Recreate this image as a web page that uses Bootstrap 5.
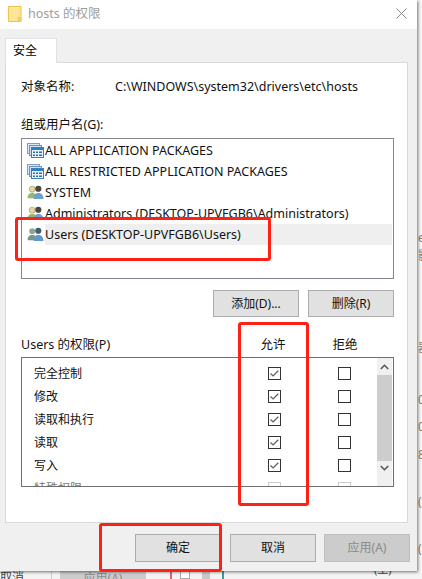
<!DOCTYPE html>
<html lang="zh-CN">
<head>
<meta charset="utf-8">
<title>hosts 的权限</title>
<link rel="stylesheet" href="https://cdn.jsdelivr.net/npm/bootstrap@5.3.0/dist/css/bootstrap.min.css">
<style>
html,body{width:422px;height:579px;overflow:hidden;background:#f7f7f7}
body{position:relative;font:12.5px/18px "Noto Sans","Noto Sans CJK SC",sans-serif;color:#111}
.stage{height:571px}
.dlg{width:417px;height:571px;background:#f0f0f0;box-shadow:1px 1px 3px rgba(0,0,0,.55);position:relative}
.ttl{height:29px;background:#fff;padding:0 0 2px 8px;color:#9d9d9d;font-size:12.5px;gap:6px}
.ttl .xbtn{margin-left:auto;margin-right:10px;display:flex}
.tabs{margin:9px 0 0 5px;border:0}
.tabs .nav-link{width:52px;height:25px;padding:2px 0 0 7px;margin-bottom:-1px;font-size:12px;line-height:20px;color:#111;background:#fff;border:1px solid #d9d9d9;border-bottom:0;border-radius:0;position:relative;z-index:1}
.pane{width:403px;height:461px;margin-left:5px;background:#fff;border:1px solid #d9d9d9;padding:15px 13px 0 15px}
.pathrow{height:18px}
.pathlbl{width:94px}
.grp{margin-top:20px;height:18px}
.lbox{height:141px;margin-top:4px;border:1px solid #828790;padding:1px 1px 0 1px;border-radius:0;background:#fff}
.lbox .list-group-item{height:21px;padding:0 0 0 4px;border:0;background:transparent;color:#111;line-height:21px;border-radius:0}
.lbox .list-group-item svg{flex:none;margin-right:1px}
.lbox .sel span{flex:1;background:#efefef}
.acts{margin-top:11px;gap:9px}
.wbtn{width:86px;height:27px;padding:0;font-size:12px;line-height:24px;color:#111;background:#e1e1e1;border:1px solid #adadad;border-radius:0}
.wbtn:disabled{background:#ccc;border-color:#bfbfbf;color:#8a8a8a;opacity:1}
.permh{margin-top:19px;height:18px}
.permh .nm{width:227px}
.permh .cola{width:50px;text-align:center}
.permh .colb{width:50px;text-align:center;margin-left:22px}
.pbox{height:130px;margin-top:3px;border:1px solid #6f6f6f;overflow:hidden;background:#fff}
.prows{flex:1;padding:4px 0 0 12px}
.prow{height:23px;line-height:23px;font-size:12px}
.prow .nm{width:234px}
.prow .form-check-input{width:13px;height:13px;margin:0;flex:none;border:1px solid #333;border-radius:0;background-color:#fff;box-shadow:none;opacity:1}
.prow .form-check-input:checked{background-color:#fff;border-color:#333;background-image:url("data:image/svg+xml,%3Csvg xmlns='http://www.w3.org/2000/svg' viewBox='0 0 11 11'%3E%3Cpath d='M1.5 5.5l2.6 2.4 5.2-5.2' fill='none' stroke='%23606060' stroke-width='1.3'/%3E%3C/svg%3E");background-size:11px 11px}
.prow .gapb{margin-left:57px}
.prow.off{color:#777}
.prow.off .form-check-input{border-color:#ccc}
.sbar{width:15px;margin-right:1px;background:#f0f0f0;flex:none}
.sbar .arr{height:17px;display:flex;align-items:center;justify-content:center}
.sbar .thumb{flex:1;background:#cdcdcd}
.foot{margin-top:11px;padding-left:135px;gap:9px}
.foot .wbtn{height:28px}
.foot .apply{margin-left:-1px}
.rmark{position:absolute;border:3px solid #ff2016;border-radius:3px;pointer-events:none;z-index:5}
.rm1{left:15px;top:217px;width:256px;height:44px}
.rm2{left:238px;top:322px;width:71px;height:184px}
.rm3{left:99px;top:523px;width:123px;height:49px}
.peekr{width:5px;overflow:hidden;color:#8f7f6c;font-size:12px;line-height:12px;padding-left:1px}
.peekr div{white-space:nowrap}
.peekr div:nth-child(1){margin-top:232px}
.peekr div:nth-child(2){margin-top:6px}
.peekr div:nth-child(3){margin-top:80px}
.peekr div:nth-child(4){margin-top:40px}
.peekr div:nth-child(5){margin-top:15px}
.peekr div:nth-child(6){margin-top:16px}
.peekr div:nth-child(7){margin-top:35px}
.peekr div:nth-child(8){margin-top:35px}
.peekb{height:8px;overflow:hidden;background:#f4f4f4;font-size:12px;line-height:18px;color:#444}
.peekb>*{flex:none;height:8px}
.pb-a{width:52px;border-right:1px solid #cfcfcf;margin-top:-2px;height:10px!important}
.pb-b{width:86px;margin-left:8px;background:#ccc;color:#8a8a8a;text-align:center;margin-top:-1px;height:9px!important}
.pb-c{width:2px;margin-left:24px;background:#d9666e}
.pb-d{width:10px;margin-left:8px;background:#fff;border:1px solid #aaa}
.pb-e{width:8px;margin-left:12px;background:#c8c8c8}
.pb-f{width:2px;margin-left:12px;background:#3f9b93}
.pb-g{margin-left:150px;font-size:11px;margin-top:-10px;height:18px!important}
</style>
</head>
<body>
<svg width="0" height="0" class="d-none">
<symbol id="ipk" viewBox="0 0 17 15">
<rect x=".5" y=".5" width="12" height="10" fill="#dbe8f4" stroke="#7f9fc0"/>
<rect x="2.5" y="2.5" width="12" height="10" fill="#cfe0f0" stroke="#6e93b8"/>
<rect x="4.500" y="4.500" width="12" height="10" fill="#eaf3fb" stroke="#3f7db5"/>
<rect x="5" y="5" width="11" height="2" fill="#2f7fc8"/>
<path d="M6 8.500h2V10H6zM9 8.500h2V10H9zM12 8.500h3V10h-3zM6 11.500h2V13H6zM9 11.500h2V13H9zM12 11.500h3V13h-3z" fill="#2a6fb0"/>
</symbol>
<symbol id="igr" viewBox="0 0 18 16">
<circle cx="5.5" cy="4.5" r="3.2" fill="#e9d3a8" stroke="#8f9a62" stroke-width=".7"/>
<path d="M.5 14c0-4 2-5.500 5-5.500s5 1.500 5 5.500z" fill="#8fbb6a"/>
<circle cx="12" cy="4" r="3.300" fill="#4d4640"/>
<path d="M7 15c0-4.500 2-6.500 5-6.500s5.500 2 5.500 6.500z" fill="#6d9fd0"/>
</symbol>
<symbol id="igs" viewBox="0 0 18 16">
<circle cx="5.500" cy="4.500" r="3.200" fill="#8fa59a"/>
<path d="M.5 14c0-4 2-5.500 5-5.500s5 1.500 5 5.500z" fill="#6f9a84"/>
<circle cx="12" cy="4" r="3.300" fill="#3f5f70"/>
<path d="M7 15c0-4.500 2-6.500 5-6.500s5.500 2 5.500 6.500z" fill="#5f97cf"/>
</symbol>
</svg>

<div class="stage d-flex">
  <div class="dlg d-flex flex-column">
    <div class="ttl d-flex align-items-center">
      <svg width="14" height="16" viewBox="0 0 14 16" class="flex-shrink-0"><path d="M.5.500h12.500v15H.5z" fill="#ffe597" stroke="#ecc34f"/><path d="M10 15.500v-4h3v4z" fill="#f6d26a" stroke="#ecc34f" stroke-width=".7"/></svg>
      <span>hosts 的权限</span>
      <span class="xbtn"><svg width="11" height="11" viewBox="0 0 11 11"><path d="M.5.500l10 10M10.500.500l-10 10" stroke="#8a8a8a" stroke-width="1" fill="none"/></svg></span>
    </div>
    <ul class="nav nav-tabs tabs"><li class="nav-item"><a class="nav-link active" href="#">安全</a></li></ul>
    <div class="pane">
      <div class="pathrow d-flex"><span class="pathlbl">对象名称:</span><span>C:\WINDOWS\system32\drivers\etc\hosts</span></div>
      <div class="grp">组或用户名(G):</div>
      <div class="list-group lbox">
        <div class="list-group-item d-flex align-items-center"><svg width="17" height="15"><use href="#ipk"/></svg><span>ALL APPLICATION PACKAGES</span></div>
        <div class="list-group-item d-flex align-items-center"><svg width="17" height="15"><use href="#ipk"/></svg><span>ALL RESTRICTED APPLICATION PACKAGES</span></div>
        <div class="list-group-item d-flex align-items-center"><svg width="17" height="15"><use href="#igr"/></svg><span>SYSTEM</span></div>
        <div class="list-group-item d-flex align-items-center"><svg width="17" height="15"><use href="#igr"/></svg><span>Administrators (DESKTOP-UPVFGB6\Administrators)</span></div>
        <div class="list-group-item sel d-flex align-items-center"><svg width="17" height="15"><use href="#igs"/></svg><span>Users (DESKTOP-UPVFGB6\Users)</span></div>
      </div>
      <div class="acts d-flex justify-content-end">
        <button type="button" class="btn wbtn">添加(D)...</button>
        <button type="button" class="btn wbtn">删除(R)</button>
      </div>
      <div class="permh d-flex"><span class="nm">Users 的权限(P)</span><span class="cola">允许</span><span class="colb">拒绝</span></div>
      <div class="pbox d-flex">
        <div class="prows">
          <div class="prow d-flex align-items-center"><span class="nm">完全控制</span><input class="form-check-input" type="checkbox" checked aria-label="允许"><input class="form-check-input gapb" type="checkbox" aria-label="拒绝"></div>
          <div class="prow d-flex align-items-center"><span class="nm">修改</span><input class="form-check-input" type="checkbox" checked aria-label="允许"><input class="form-check-input gapb" type="checkbox" aria-label="拒绝"></div>
          <div class="prow d-flex align-items-center"><span class="nm">读取和执行</span><input class="form-check-input" type="checkbox" checked aria-label="允许"><input class="form-check-input gapb" type="checkbox" aria-label="拒绝"></div>
          <div class="prow d-flex align-items-center"><span class="nm">读取</span><input class="form-check-input" type="checkbox" checked aria-label="允许"><input class="form-check-input gapb" type="checkbox" aria-label="拒绝"></div>
          <div class="prow d-flex align-items-center"><span class="nm">写入</span><input class="form-check-input" type="checkbox" checked aria-label="允许"><input class="form-check-input gapb" type="checkbox" aria-label="拒绝"></div>
          <div class="prow off d-flex align-items-center"><span class="nm">特殊权限</span><input class="form-check-input" type="checkbox" aria-label="允许"><input class="form-check-input gapb" type="checkbox" aria-label="拒绝"></div>
        </div>
        <div class="sbar d-flex flex-column">
          <div class="arr"><svg width="9" height="6" viewBox="0 0 9 6"><path d="M.8 5l3.700-3.700L8.200 5" fill="none" stroke="#555" stroke-width="1.600"/></svg></div>
          <div class="thumb"></div>
          <div class="arr mb-1 pb-1"><svg width="9" height="6" viewBox="0 0 9 6"><path d="M.8 1l3.700 3.700L8.200 1" fill="none" stroke="#555" stroke-width="1.600"/></svg></div>
          <div class="mb-1"></div>
        </div>
      </div>
    </div>
    <div class="foot d-flex">
      <button type="button" class="btn wbtn">确定</button>
      <button type="button" class="btn wbtn">取消</button>
      <button type="button" class="btn wbtn apply" disabled>应用(A)</button>
    </div>
  </div>
  <div class="peekr"><div>e</div><div>影</div><div>器</div><div>0</div><div>0</div><div>8</div><div>(</div><div>(</div></div>
</div>
<div class="peekb d-flex">
  <div class="pb-a">取消</div><div class="pb-b">应用(A)</div><div class="pb-c"></div><div class="pb-d"></div><div class="pb-e"></div><div class="pb-f"></div><div class="pb-g">(工)</div>
</div>
<div class="rmark rm1"></div>
<div class="rmark rm2"></div>
<div class="rmark rm3"></div>
<script src="https://cdn.jsdelivr.net/npm/bootstrap@5.3.0/dist/js/bootstrap.bundle.min.js"></script>
</body>
</html>
